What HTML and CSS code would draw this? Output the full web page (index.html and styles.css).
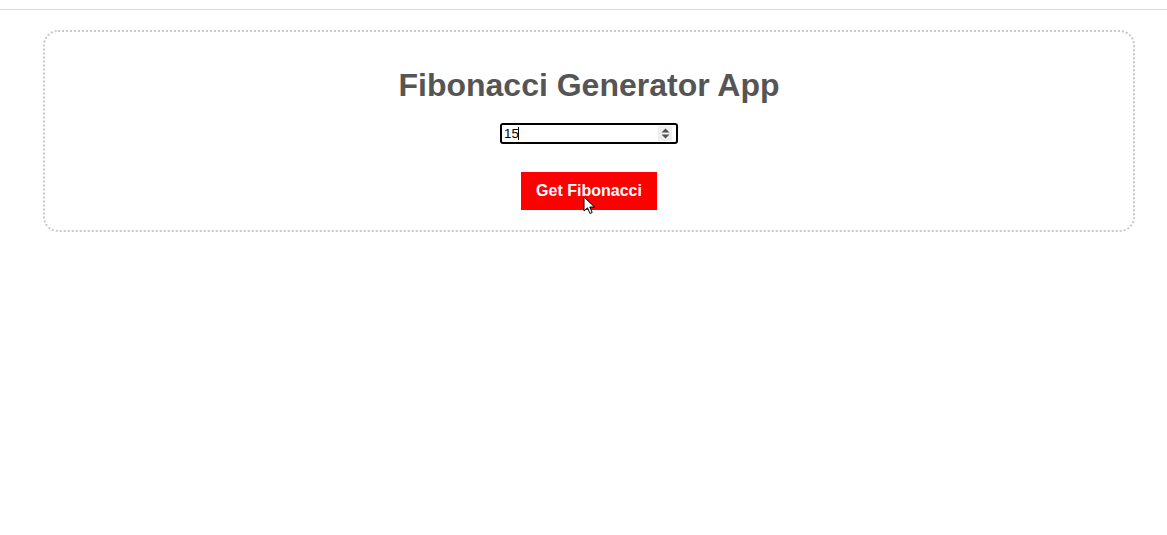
FILE: index.html
```html
<!DOCTYPE html>
<html lang="en">
<head>
    <meta charset="UTF-8">
    <meta name="viewport" content="width=device-width, initial-scale=1.0">
    <title>Fibonacci Generator App</title>
    <link rel="stylesheet" href="styles.css">
</head>
<body>
    <div class="topbar"></div>

    <div class="container">
        <h1>Fibonacci Generator App</h1>

        <div class="form-row">
            <div class="input-wrap">
                <input type="number" id="fib-count" value="15">
                <span class="caret"></span>
                <span class="spinner">
                    <svg width="9" height="11" viewBox="0 0 9 11">
                        <path d="M4.5 0.5 L8.5 4.5 L0.5 4.5 Z" fill="#505050"/>
                        <path d="M0.5 6.5 L8.5 6.5 L4.5 10.5 Z" fill="#505050"/>
                    </svg>
                </span>
            </div>
        </div>

        <div class="form-row">
            <div class="button-wrap">
                <button id="get-fib">Get Fibonacci</button>
                <svg class="cursor" width="14" height="20" viewBox="0 0 14 20">
                    <path d="M1 1 L1 15 L4.5 11.8 L7 17.5 L9.2 16.5 L6.8 11 L11.5 11 Z" fill="#fff" stroke="#000" stroke-width="1"/>
                </svg>
            </div>
        </div>
    </div>
</body>
</html>
```

FILE: styles.css
```css
body {
    font-family: "Liberation Sans", Arial, Helvetica, sans-serif;
    background-color: #ffffff;
    margin: 0;
    padding: 0;
}

.topbar {
    height: 9px;
    border-bottom: 1px solid #dcdcdc;
}

.container {
    box-sizing: border-box;
    width: 1092px;
    margin: 20px 0 0 43px;
    padding: 35px 20px 20px;
    border: 2px dotted #c8c8c8;
    border-radius: 15px;
    text-align: center;
}

h1 {
    margin: 0;
    font-size: 32px;
    line-height: 37px;
    font-weight: bold;
    color: #555555;
}

.form-row {
    display: flex;
    justify-content: center;
}

.input-wrap {
    position: relative;
    margin-top: 19px;
}

#fib-count {
    display: block;
    box-sizing: border-box;
    width: 178px;
    height: 21px;
    padding: 0 4px 0 2px;
    border: 2px solid #000000;
    border-radius: 3px;
    font-family: "Liberation Sans", Arial, sans-serif;
    font-size: 13.33px;
    color: #000000;
    outline: none;
    -moz-appearance: textfield;
}

#fib-count::-webkit-inner-spin-button,
#fib-count::-webkit-outer-spin-button {
    -webkit-appearance: none;
    margin: 0;
}

.caret {
    position: absolute;
    left: 18px;
    top: 4px;
    width: 1px;
    height: 13px;
    background-color: #000000;
}

.spinner {
    position: absolute;
    right: 6px;
    top: 3px;
    width: 14px;
    height: 15px;
    background-color: #efefef;
    display: flex;
    align-items: center;
    justify-content: center;
}

.button-wrap {
    position: relative;
    margin-top: 28px;
}

#get-fib {
    display: block;
    height: 38px;
    padding: 0 15px;
    background-color: #ff0000;
    color: white;
    border: none;
    font-family: "Liberation Sans", Arial, sans-serif;
    font-size: 16px;
    font-weight: bold;
    cursor: pointer;
}

.cursor {
    position: absolute;
    left: 62px;
    top: 24px;
}
```
